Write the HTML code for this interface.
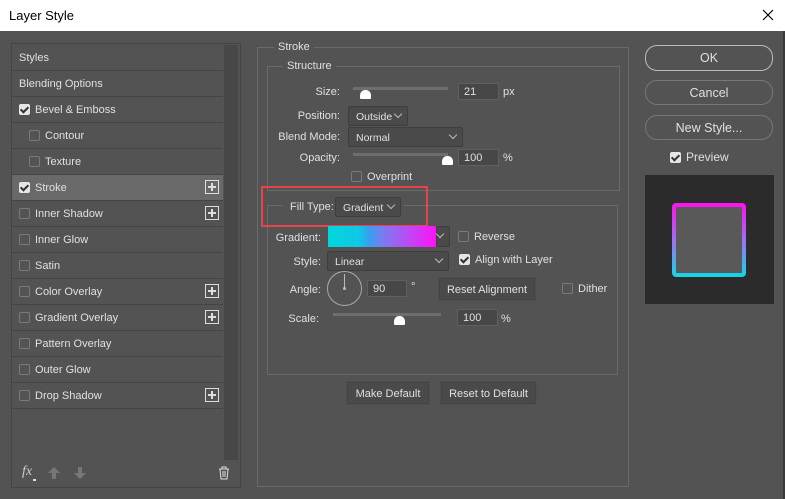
<!DOCTYPE html>
<html><head><meta charset="utf-8"><style>
*{margin:0;padding:0;box-sizing:border-box}
body{width:785px;height:499px;overflow:hidden;background:#535353;font-family:"Liberation Sans",sans-serif;font-size:11px;color:#e0e0e0;position:relative}
.a{position:absolute}
.title{left:0;top:0;width:785px;height:31px;background:#fff;color:#000;font-size:13px;padding:8px 0 0 9px}
.row{position:absolute;left:12px;width:211px;height:26px;border-bottom:1px solid #444;padding:7px 0 0 7px;white-space:nowrap}
.cb{display:inline-block;width:11px;height:11px;border:1px solid #7a7a7a;border-radius:2px;vertical-align:-2px;margin-right:5px}
.cb.on{background:#e6e6e6;border-color:#e6e6e6;position:relative}
.cb.on:after{content:"";position:absolute;left:2px;top:0px;width:3px;height:6px;border:solid #333;border-width:0 2px 2px 0;transform:rotate(45deg)}
.plus{position:absolute;left:193px;top:5px;width:14px;height:14px;border:1px solid #ddd}
.plus:before{content:"";position:absolute;left:2px;top:5px;width:8px;height:2px;background:#ddd}
.plus:after{content:"";position:absolute;left:5px;top:2px;width:2px;height:8px;background:#ddd}
.fs{position:absolute;border:1px solid #6a6a6a}
.lbl{position:absolute;text-align:right;white-space:nowrap}
.inp{position:absolute;background:#474747;border:1px solid #5f5f5f;height:17px;padding:2px 0 0 5px}
.sel{position:absolute;background:#4a4a4a;border:1px solid #3e3e3e;border-radius:2px;height:20px;padding:4px 16px 0 7px;font-size:10.5px;white-space:nowrap}
.sel:after{content:"";position:absolute;right:6px;top:4px;width:5px;height:5px;border:solid #bbb;border-width:0 1px 1px 0;transform:rotate(45deg)}
.track{position:absolute;height:3px;background:#6e6e6e}
.thumb{position:absolute;width:11px;height:9px;background:#fff;border-radius:5px 5px 1px 1px}
.btn{position:absolute;background:#4a4a4a;border:1px solid #444;text-align:center;padding-top:5px;box-shadow:0 0 0 1px #4f4f4f}
.pill{position:absolute;left:645px;width:128px;border:1px solid #888;border-radius:12px;text-align:center;font-size:12.5px}
</style></head><body>
<div class="a title">Layer Style</div>
<div class="a" style="left:783px;top:31px;width:2px;height:468px;background:#3a3a3a"></div>
<svg class="a" style="left:762px;top:9px" width="12" height="12"><path d="M1 1L11 11M11 1L1 11" stroke="#000" stroke-width="1.2"/></svg>

<div class="a" style="left:11px;top:43px;width:230px;height:445px;border:1px solid #444"></div>
<div class="a" style="left:224px;top:45px;width:14px;height:415px;background:#474747"></div>
<div class="row" style="top:45px">Styles</div>
<div class="row" style="top:71px">Blending Options</div>
<div class="row" style="top:97px"><span class="cb on"></span>Bevel &amp; Emboss</div>
<div class="row" style="top:123px;padding-left:17px"><span class="cb"></span>Contour</div>
<div class="row" style="top:149px;padding-left:17px"><span class="cb"></span>Texture</div>
<div class="row" style="top:175px;background:#696969"><span class="cb on"></span>Stroke<span class="plus"></span></div>
<div class="row" style="top:201px"><span class="cb"></span>Inner Shadow<span class="plus"></span></div>
<div class="row" style="top:227px"><span class="cb"></span>Inner Glow</div>
<div class="row" style="top:253px"><span class="cb"></span>Satin</div>
<div class="row" style="top:279px"><span class="cb"></span>Color Overlay<span class="plus"></span></div>
<div class="row" style="top:305px"><span class="cb"></span>Gradient Overlay<span class="plus"></span></div>
<div class="row" style="top:331px"><span class="cb"></span>Pattern Overlay</div>
<div class="row" style="top:357px"><span class="cb"></span>Outer Glow</div>
<div class="row" style="top:383px"><span class="cb"></span>Drop Shadow<span class="plus"></span></div>
<div class="a" style="left:22px;top:464px;font-style:italic;font-size:14px;color:#ccc;font-family:'Liberation Serif',serif">fx</div>
<div class="a" style="left:33px;top:479px;width:3px;height:2px;background:#ddd"></div>
<svg class="a" style="left:47px;top:466px" width="14" height="14"><path d="M7 1L13 7H9V13H5V7H1Z" fill="#777"/></svg>
<svg class="a" style="left:73px;top:466px" width="14" height="14"><path d="M7 13L13 7H9V1H5V7H1Z" fill="#777"/></svg>
<svg class="a" style="left:218px;top:466px" width="12" height="14"><path d="M1 3H11M4 3V1H8V3M2 3L3 13H9L10 3M5 5V11M7 5V11" stroke="#ddd" fill="none"/></svg>

<div class="fs" style="left:257px;top:47px;width:372px;height:440px"></div>
<div class="a" style="left:274px;top:41px;background:#535353;padding:0 4px">Stroke</div>
<div class="fs" style="left:267px;top:66px;width:353px;height:125px"></div>
<div class="a" style="left:283px;top:60px;background:#535353;padding:0 4px">Structure</div>

<div class="lbl" style="right:445px;top:86px">Size:</div>
<div class="track" style="left:353px;top:87px;width:95px"></div>
<div class="thumb" style="left:360px;top:90px"></div>
<div class="inp" style="left:458px;top:83px;width:41px">21</div>
<div class="a" style="left:503px;top:86px">px</div>
<div class="lbl" style="right:445px;top:110px">Position:</div>
<div class="sel" style="left:348px;top:106px;width:60px">Outside</div>
<div class="lbl" style="right:445px;top:131px">Blend Mode:</div>
<div class="sel" style="left:348px;top:127px;width:115px">Normal</div>
<div class="lbl" style="right:445px;top:152px">Opacity:</div>
<div class="track" style="left:353px;top:153px;width:95px"></div>
<div class="thumb" style="left:442px;top:156px"></div>
<div class="inp" style="left:458px;top:149px;width:41px">100</div>
<div class="a" style="left:503px;top:152px">%</div>
<div class="a" style="left:351px;top:171px"><span class="cb"></span>Overprint</div>

<div class="fs" style="left:267px;top:205px;width:351px;height:170px"></div>
<div class="a" style="left:283px;top:196px;width:120px;height:24px;background:#535353"></div>
<div class="a" style="left:290px;top:201px">Fill Type:</div>
<div class="sel" style="left:335px;top:197px;width:66px">Gradient</div>
<div class="a" style="left:261px;top:186px;width:167px;height:41px;border:2px solid #e8434a"></div>

<div class="lbl" style="right:464px;top:232px">Gradient:</div>
<div class="a" style="left:328px;top:226px;width:108px;height:21px;background:linear-gradient(90deg,#00d6dc 0%,#10c8e6 28%,#3a9df0 38%,#7a7cf0 50%,#c048f4 75%,#ff10f8 100%)"></div>
<div class="sel" style="left:436px;top:226px;width:14px;height:21px;padding:0"></div>
<div class="a" style="left:458px;top:231px"><span class="cb"></span>Reverse</div>
<div class="lbl" style="right:464px;top:256px">Style:</div>
<div class="sel" style="left:327px;top:251px;width:122px">Linear</div>
<div class="a" style="left:459px;top:254px"><span class="cb on"></span>Align with Layer</div>
<div class="lbl" style="right:464px;top:284px">Angle:</div>
<div class="a" style="left:327px;top:271px;width:35px;height:35px;border:1px solid #aaa;border-radius:50%"></div>
<div class="a" style="left:344px;top:274px;width:1px;height:14px;background:#bbb"></div>
<div class="a" style="left:343px;top:287px;width:3px;height:3px;background:#bbb;border-radius:50%"></div>
<div class="inp" style="left:367px;top:280px;width:40px">90</div>
<div class="a" style="left:411px;top:281px">°</div>
<div class="btn" style="left:439px;top:278px;width:96px;height:22px">Reset Alignment</div>
<div class="a" style="left:562px;top:283px"><span class="cb"></span>Dither</div>
<div class="lbl" style="right:466px;top:313px">Scale:</div>
<div class="track" style="left:333px;top:313px;width:108px"></div>
<div class="thumb" style="left:394px;top:316px"></div>
<div class="inp" style="left:457px;top:309px;width:41px">100</div>
<div class="a" style="left:501px;top:313px">%</div>

<div class="btn" style="left:347px;top:382px;width:82px;height:22px">Make Default</div>
<div class="btn" style="left:441px;top:382px;width:95px;height:22px">Reset to Default</div>

<div class="pill" style="top:45px;height:26px;padding-top:5px;border-color:#bbb">OK</div>
<div class="pill" style="top:80px;height:25px;padding-top:5px;border-color:#777">Cancel</div>
<div class="pill" style="top:115px;height:25px;padding-top:5px;border-color:#777">New Style...</div>
<div class="a" style="left:670px;top:150px;font-size:12px"><span class="cb on"></span>Preview</div>
<div class="a" style="left:645px;top:175px;width:129px;height:129px;background:#2b2b2b"></div>
<div class="a" style="left:672px;top:203px;width:74px;height:74px;border-radius:4px;background:linear-gradient(180deg,#ff10f0,#a070f0 50%,#10d8e8)"></div>
<div class="a" style="left:676px;top:207px;width:66px;height:66px;background:#595959"></div>
</body></html>
